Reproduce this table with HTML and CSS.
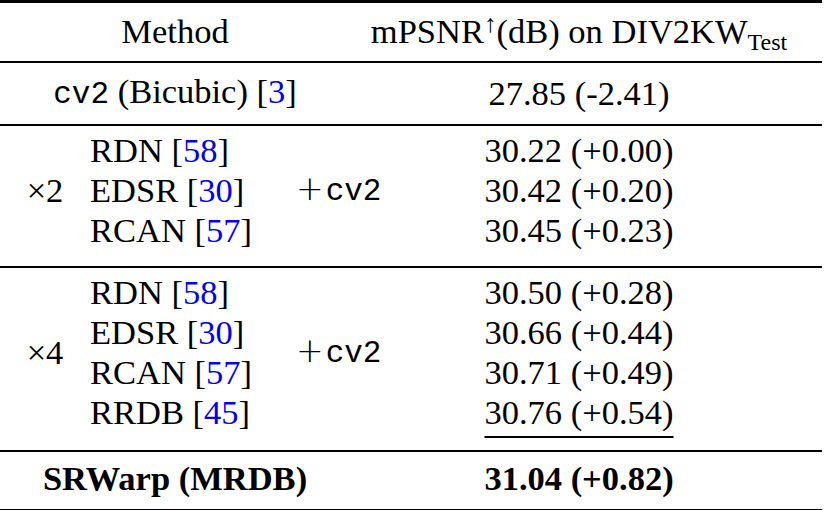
FILE: index.html
```html
<!DOCTYPE html>
<html lang="en">
<head>
    <meta charset="UTF-8">
    <title>mPSNR comparison</title>
    <link rel="stylesheet" href="styles.css">
</head>
<body>
    <table class="results">
        <colgroup>
            <col class="c-scale">
            <col class="c-method">
            <col class="c-plus">
            <col class="c-value">
        </colgroup>
        <thead>
            <tr class="first last">
                <th colspan="3" class="span-method">Method</th>
                <th class="value">mPSNR<sup>&uarr;</sup>(dB) on DIV2KW<sub>Test</sub></th>
            </tr>
        </thead>

        <!-- Baseline -->
        <tbody>
            <tr class="first last">
                <td colspan="3" class="span-method"><span class="tt">cv2</span> (Bicubic) [<span class="cite">3</span>]</td>
                <td class="value">27.85 (-2.41)</td>
            </tr>
        </tbody>

        <!-- x2 models -->
        <tbody class="group-x2">
            <tr class="first">
                <td rowspan="3" class="scale">&times;2</td>
                <td class="method">RDN [<span class="cite">58</span>]</td>
                <td rowspan="3" class="plus"><span class="op">+</span><span class="tt">cv2</span></td>
                <td class="value">30.22 (+0.00)</td>
            </tr>
            <tr>
                <td class="method">EDSR [<span class="cite">30</span>]</td>
                <td class="value">30.42 (+0.20)</td>
            </tr>
            <tr class="last">
                <td class="method">RCAN [<span class="cite">57</span>]</td>
                <td class="value">30.45 (+0.23)</td>
            </tr>
        </tbody>

        <!-- x4 models -->
        <tbody class="group-x4">
            <tr class="first">
                <td rowspan="4" class="scale">&times;4</td>
                <td class="method">RDN [<span class="cite">58</span>]</td>
                <td rowspan="4" class="plus"><span class="op">+</span><span class="tt">cv2</span></td>
                <td class="value">30.50 (+0.28)</td>
            </tr>
            <tr>
                <td class="method">EDSR [<span class="cite">30</span>]</td>
                <td class="value">30.66 (+0.44)</td>
            </tr>
            <tr>
                <td class="method">RCAN [<span class="cite">57</span>]</td>
                <td class="value">30.71 (+0.49)</td>
            </tr>
            <tr class="last">
                <td class="method">RRDB [<span class="cite">45</span>]</td>
                <td class="value"><span class="second">30.76 (+0.54)</span></td>
            </tr>
        </tbody>

        <!-- Ours -->
        <tbody class="ours">
            <tr class="first last">
                <td colspan="3" class="span-method">SRWarp (MRDB)</td>
                <td class="value">31.04 (+0.82)</td>
            </tr>
        </tbody>
    </table>
</body>
</html>
```

FILE: styles.css
```css
/* Root Variables */
:root {
    --serif: 'Liberation Serif', 'Times New Roman', serif;
    --mono: 'Liberation Mono', 'Courier New', monospace;
    --cite-color: #0000ee;
}

body {
    margin: 0;
    background: #fff;
    color: #000;
    font-family: var(--serif);
}

/* Table */
.results {
    width: 822px;
    table-layout: fixed;
    border-collapse: collapse;
    font-size: 34.5px;
    line-height: 40px;
    border-top: 3px solid #000;
    border-bottom: 3px solid #000;
}

.c-scale { width: 80px; }
.c-method { width: 210px; }
.c-plus { width: 46px; }
.c-value { width: 486px; }

.results th,
.results td {
    padding: 0;
    font-weight: normal;
    white-space: nowrap;
    vertical-align: middle;
}

.results tbody {
    border-top: 2px solid #000;
}

/* Vertical spacing per group */
thead tr.first th { padding-top: 8px; }
thead tr.last th { padding-bottom: 10px; }

tbody tr.first td { padding-top: 8px; }
tbody tr.last td { padding-bottom: 9px; }

.group-x2 tr.first td { padding-top: 4px; }
.group-x2 tr.last td { padding-bottom: 16px; }
.group-x2 .scale,
.group-x2 .plus { padding-bottom: 16px; }

.group-x4 tr.first td { padding-top: 4px; }
.group-x4 tr.last td { padding-bottom: 18px; }
.group-x4 .scale,
.group-x4 .plus { padding-bottom: 18px; }

.ours tr.first td { padding-top: 6px; }
.ours tr.last td { padding-bottom: 11px; }

/* Columns */
.span-method {
    text-align: center;
    padding-left: 14px !important;
}

.scale {
    text-align: center;
    padding-left: 10px !important;
}

.method {
    text-align: left;
    padding-left: 10px !important;
}

.plus {
    text-align: left;
    padding-left: 6px !important;
    overflow: visible;
}

.op {
    font-family: 'DejaVu Sans', sans-serif;
    font-weight: 200;
    font-size: 33px;
    line-height: 0;
    margin-right: 2px;
}

.value {
    text-align: center;
}

/* Inline bits */
.tt {
    font-family: var(--mono);
    font-size: 31px;
}

.cite {
    color: var(--cite-color);
}

sup {
    font-size: 25px;
    line-height: 0;
    vertical-align: 11px;
}

sub {
    font-size: 24px;
    line-height: 0;
    vertical-align: -7px;
}

.second {
    text-decoration: underline;
    text-decoration-thickness: 1.5px;
    text-underline-offset: 12px;
}

.ours td {
    font-weight: bold;
}
```
